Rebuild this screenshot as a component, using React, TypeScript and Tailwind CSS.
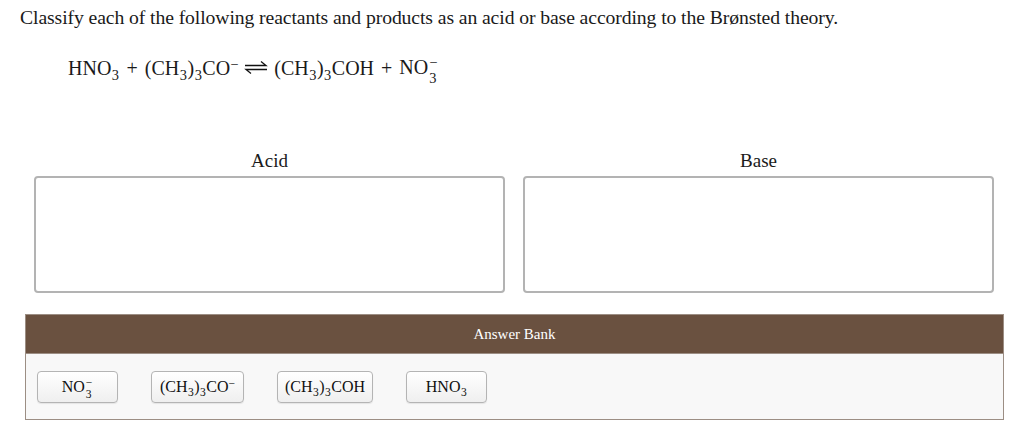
import React from "react";

const serif = { fontFamily: '"Liberation Serif", "Times New Roman", serif' };

function Stack({ sup, sub }: { sup?: string; sub?: string }) {
  return (
    <span className="inline-flex flex-col items-start align-middle leading-none text-[0.72em] relative top-[0.05em] mx-[1px]">
      <span className="h-[0.75em] leading-none relative -top-[0.15em]">{sup ?? "\u00a0"}</span>
      <span className="leading-none relative top-[0.2em]">{sub ?? "\u00a0"}</span>
    </span>
  );
}

function Sub({ children }: { children: React.ReactNode }) {
  return <span className="text-[0.72em] relative top-[0.38em] leading-none mx-[0.5px]">{children}</span>;
}
function Sup({ children }: { children: React.ReactNode }) {
  return <span className="text-[0.72em] relative -top-[0.4em] leading-none">{children}</span>;
}

function Arrow() {
  return (
    <svg width="24" height="14" viewBox="0 0 24 14" className="inline-block mx-[6px] relative top-[-1px]">
      <path d="M1 5.5 H22 L17 1.5" fill="none" stroke="#111" strokeWidth="1.3" />
      <path d="M23 9.5 H2 L7 13.5" fill="none" stroke="#111" strokeWidth="1.3" />
    </svg>
  );
}

const NO3m = () => (
  <span>
    NO
    <Stack sup="−" sub="3" />
  </span>
);
const tBuO = () => (
  <span>
    (CH<Sub>3</Sub>)<Sub>3</Sub>CO<Sup>−</Sup>
  </span>
);
const tBuOH = () => (
  <span>
    (CH<Sub>3</Sub>)<Sub>3</Sub>COH
  </span>
);
const HNO3 = () => (
  <span>
    HNO<Sub>3</Sub>
  </span>
);

function Chip({ children, w }: { children: React.ReactNode; w: string }) {
  return (
    <div
      className={`${w} h-[32px] flex items-center justify-center rounded-[4px] border border-[#b4b4b4] bg-gradient-to-b from-white to-[#efefef] text-[16px] text-[#111] shadow-[0_1px_1px_rgba(0,0,0,0.08)]`}
    >
      {children}
    </div>
  );
}

export default function App() {
  return (
    <div className="w-[1024px] h-[436px] bg-white text-[#1a1a1a] overflow-hidden" style={serif}>
      <div className="pl-[20px] pt-[5px] text-[19.7px] leading-[24px] tracking-[-0.1px]">
        Classify each of the following reactants and products as an acid or base according to the Brønsted theory.
      </div>
      <div className="pl-[68px] mt-[26px] h-[26px] text-[20px] leading-[26px] flex items-center whitespace-nowrap">
        <HNO3 />
        <span className="mx-[7px]">+</span>
        {tBuO()}
        <Arrow />
        {tBuOH()}
        <span className="mx-[7px]">+</span>
        <NO3m />
      </div>

      <div className="flex gap-[18px] pl-[34px] mt-[68px]">
        <div className="w-[471px] flex flex-col items-center">
          <div className="text-[19px] leading-[24px] mb-[3px]">Acid</div>
          <div className="w-full h-[117px] rounded-[4px] border-2 border-[#b3b3b3] bg-white" />
        </div>
        <div className="w-[471px] flex flex-col items-center">
          <div className="text-[19px] leading-[24px] mb-[3px]">Base</div>
          <div className="w-full h-[117px] rounded-[4px] border-2 border-[#b3b3b3] bg-white" />
        </div>
      </div>

      <div className="ml-[25px] mt-[21px] w-[979px] border border-[#9c8e84]">
        <div className="h-[39px] bg-[#6a5140] border-b border-[#9c8e84] flex items-center justify-center text-white text-[15px]">
          Answer Bank
        </div>
        <div className="h-[65px] bg-[#f8f8f8] flex items-center gap-[33px] pl-[11px]">
          <Chip w="w-[81px]">
            <NO3m />
          </Chip>
          <Chip w="w-[93px]">{tBuO()}</Chip>
          <Chip w="w-[96px]">{tBuOH()}</Chip>
          <Chip w="w-[81px]">
            <HNO3 />
          </Chip>
        </div>
      </div>
    </div>
  );
}
